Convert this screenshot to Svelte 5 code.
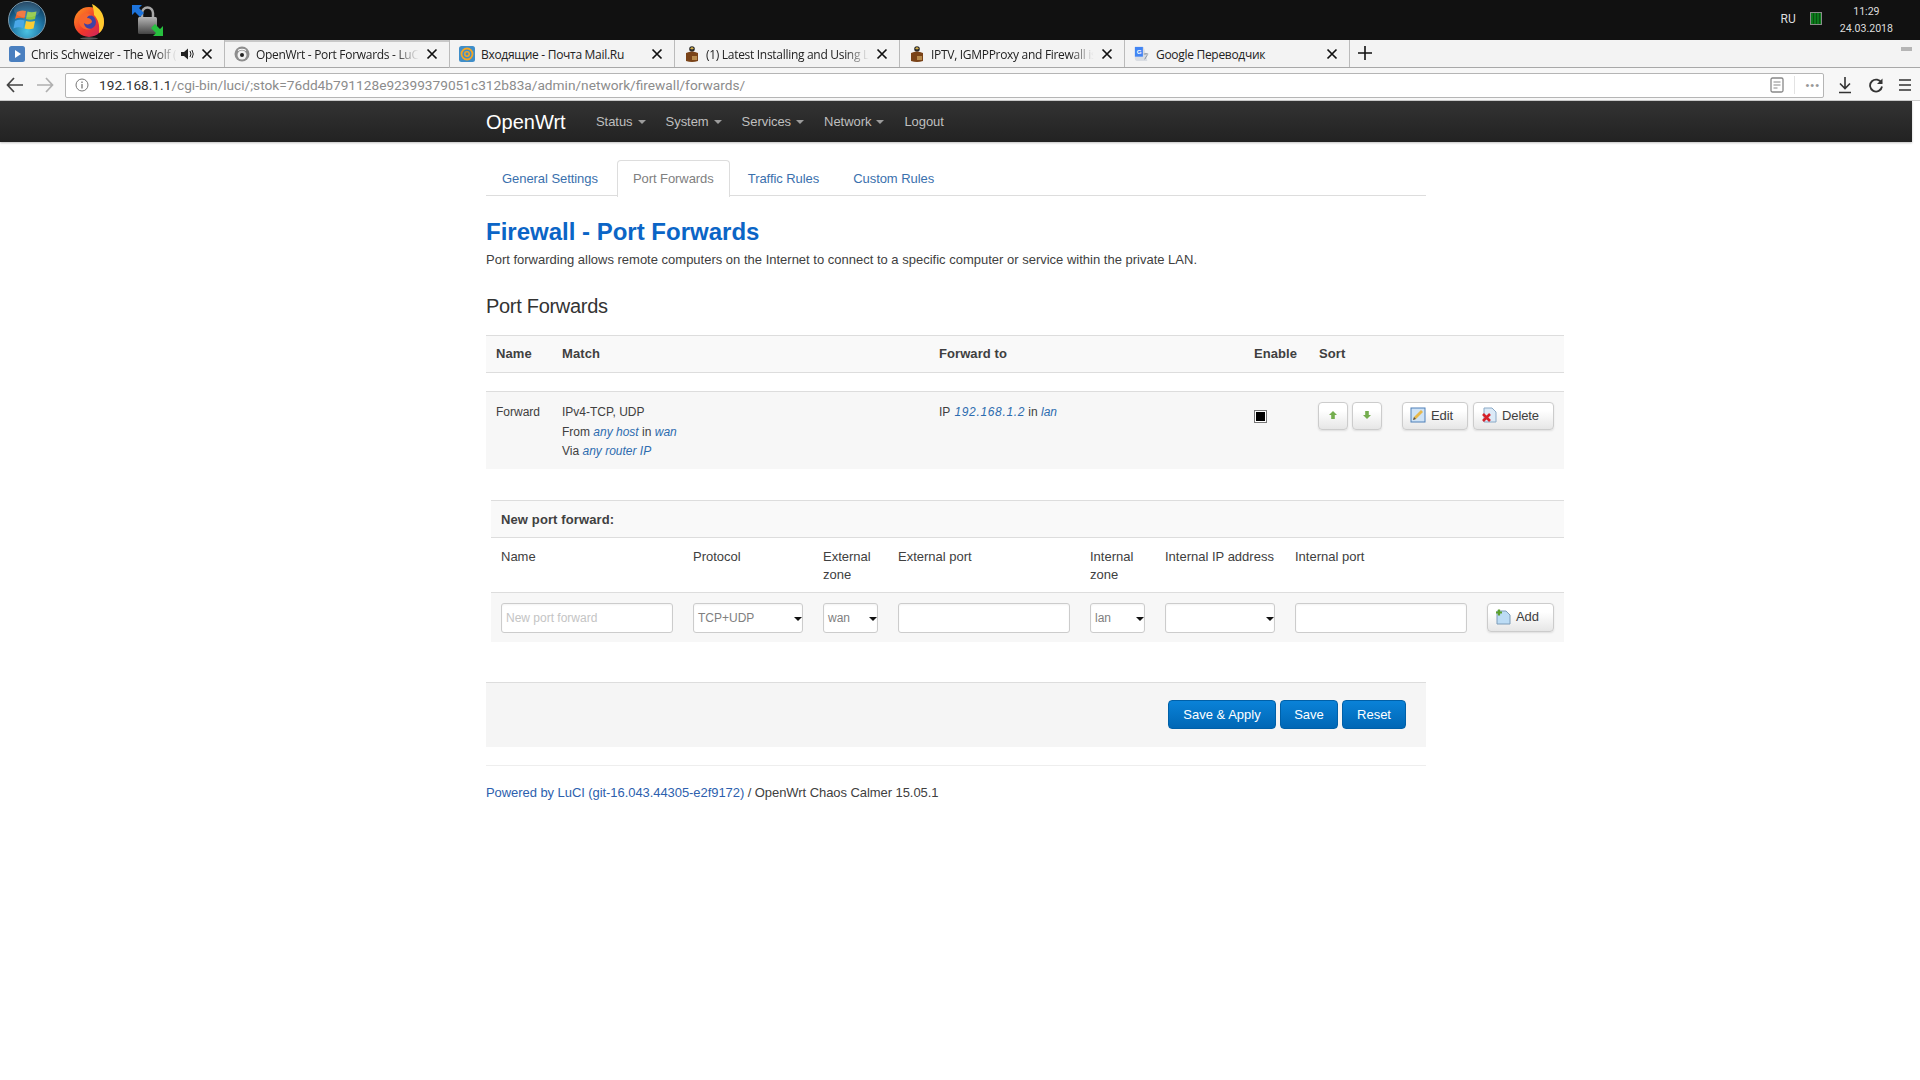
<script>
	const tabs = [
		{ title: 'Chris Schweizer - The Wolf (', icon: 'play', audio: true, fade: true },
		{ title: 'OpenWrt - Port Forwards - LuC', icon: 'wrt', active: true, fade: true },
		{ title: 'Входящие - Почта Mail.Ru', icon: 'mail' },
		{ title: '(1) Latest Installing and Using L', icon: 'box', fade: true },
		{ title: 'IPTV, IGMPProxy and Firewall is', icon: 'box', fade: true },
		{ title: 'Google Переводчик', icon: 'translate' }
	];
	const navItems = ['Status', 'System', 'Services', 'Network'];
	const pageTabs = ['General Settings', 'Port Forwards', 'Traffic Rules', 'Custom Rules'];
	const newLabels = [
		['Name'],
		['Protocol'],
		['External', 'zone'],
		['External port'],
		['Internal', 'zone'],
		['Internal IP address'],
		['Internal port'],
		[]
	];
</script>

<div class="screen">
	<div class="taskbar">
		<div class="tray-left">
			<svg class="orb" width="38" height="38" viewBox="0 0 38 38">
				<defs>
					<radialGradient id="orbFill" cx="50%" cy="80%" r="75%">
						<stop offset="0" stop-color="#4cc3e2" />
						<stop offset="0.55" stop-color="#2078a8" />
						<stop offset="1" stop-color="#0e3a5c" />
					</radialGradient>
				</defs>
				<circle cx="19" cy="19" r="18.500" fill="url(#orbFill)" stroke="#7d9aab" />
				<path d="M9 11q4-2.500 9-1l-1.500 7.500q-5-1.500-9.500.5z" fill="#f0682c" />
				<path d="M19.500 10.500q4 1.500 9 0L27 18q-5 1.500-9 0z" fill="#8cc63f" />
				<path d="M7 20q4.500-2 9.500-.5L15 27q-5-1.500-9.500.5z" fill="#4aa8e8" />
				<path d="M18 20q4 1.500 9 0l-1.500 7.500q-5 1.500-9 0z" fill="#fbcc34" />
				<ellipse cx="19" cy="9" rx="13" ry="7.500" fill="#fff" opacity="0.12" />
			</svg>
			<svg class="fox" width="32" height="36" viewBox="0 0 32 36">
				<defs>
					<linearGradient id="foxFill" x1="0" y1="0" x2="1" y2="1">
						<stop offset="0" stop-color="#ff9a1e" />
						<stop offset="0.55" stop-color="#f0362c" />
						<stop offset="1" stop-color="#c31f6a" />
					</linearGradient>
				</defs>
				<circle cx="16" cy="18" r="15" fill="url(#foxFill)" />
				<path d="M19 0c8 4 12 10 12 18 0 5-2 9-5 11 1-8-1-14-5-18 0-4-1-8-2-11z" fill="#ffcb2e" />
				<circle cx="16" cy="18" r="7" fill="#3f42a6" />
				<path d="M8 11c5-3 9-2 11 1-3-1-4 0-5 2 3 0 5 2 5 4-2 3-6 3-8 1 0 3 3 6 7 6-5 2-11-1-12-7 0-3 1-5 2-7z" fill="#f7662c" />
				<ellipse cx="16" cy="34.500" rx="9" ry="1.200" fill="#888" opacity="0.6" />
			</svg>
			<svg class="vpn" width="34" height="36" viewBox="0 0 34 36">
				<defs>
					<linearGradient id="lockFill" x1="0" y1="0" x2="0" y2="1">
						<stop offset="0" stop-color="#b5b5b5" />
						<stop offset="1" stop-color="#444" />
					</linearGradient>
				</defs>
				<path d="M11 13V9a5.500 5.500 0 0 1 11 0v4" fill="none" stroke="#a8a8a8" stroke-width="2.500" />
				<rect x="7" y="13" width="19" height="17" rx="1.500" fill="url(#lockFill)" />
				<path d="M1 1h10L8 4l5 5-4 4-5-5-3 3z" fill="#1d74dc" />
				<path d="M32 32H22l3-3-5-5 4-4 5 5 3-3z" fill="#27c03f" />
			</svg>
		</div>
		<div class="tray-right">
			<span class="lang">RU</span>
			<span class="meter"></span>
			<div class="clock"><span>11:29</span><span>24.03.2018</span></div>
		</div>
	</div>

	<div class="tabstrip">
		{#each tabs as tab}
			<div class="tab" class:active={tab.active}>
				<span class="favicon">
					{#if tab.icon === 'play'}
						<svg width="16" height="16" viewBox="0 0 16 16"><rect width="16" height="16" rx="2.500" fill="#4a7fbf" /><path d="M6 4l6 4-6 4z" fill="#fff" /></svg>
					{:else if tab.icon === 'wrt'}
						<svg width="16" height="16" viewBox="0 0 16 16"><circle cx="8" cy="8" r="7.500" fill="#8d8d8d" /><circle cx="8" cy="9" r="4.500" fill="#f2f2f2" /><circle cx="8" cy="9" r="2" fill="#222" /><path d="M4 4.500q4-2.500 8 0" fill="none" stroke="#fff" stroke-width="1.200" /></svg>
					{:else if tab.icon === 'mail'}
						<svg width="16" height="16" viewBox="0 0 16 16"><rect width="16" height="16" rx="2.500" fill="#3f8ec9" /><circle cx="8" cy="8" r="5.500" fill="none" stroke="#f5a623" stroke-width="1.800" /><circle cx="8" cy="8" r="2.200" fill="none" stroke="#f5a623" stroke-width="1.500" /></svg>
					{:else if tab.icon === 'box'}
						<svg width="16" height="18" viewBox="0 0 16 18"><circle cx="8" cy="4" r="2.800" fill="#2b2b2b" /><path d="M6 3.500l2-1.500 2 1.500-2 1z" fill="#d8b24a" /><path d="M2 8q6-3 12 0v8q-6 2-12 0z" fill="#7a4318" /><rect x="8" y="11" width="5" height="4" fill="#b88a4c" /></svg>
					{:else}
						<svg width="18" height="18" viewBox="0 0 18 18"><path d="M1 1h10l4 16H5q-4 0-4-3z" fill="#d9dde3" /><path d="M1 1h9v11H1z" fill="#4285f4" /><text x="3" y="9" class="g-letter">G</text><path d="M11 9h5M13.500 8v1M12 15l3-5" stroke="#7d8794" stroke-width="1" fill="none" /></svg>
					{/if}
				</span>
				<span class="tab-title" class:faded={tab.fade}>{tab.title}</span>
				{#if tab.audio}
					<svg class="speaker" width="14" height="14" viewBox="0 0 14 14"><path d="M1 5h3l4-3.500v11L4 9H1z" fill="#222" /><path d="M10 4q2 3 0 6M12 3q2.500 4 0 8" fill="none" stroke="#222" stroke-width="1" /></svg>
				{/if}
				<svg class="close" width="12" height="12" viewBox="0 0 12 12"><path d="M1.500 1.500l9 9M10.500 1.500l-9 9" stroke="#111" stroke-width="1.700" /></svg>
			</div>
		{/each}
		<svg class="newtab" width="16" height="16" viewBox="0 0 16 16"><path d="M8 1v14M1 8h14" stroke="#111" stroke-width="1.600" /></svg>
		<span class="minimize"></span>
	</div>

	<div class="toolbar">
		<svg class="back" width="18" height="16" viewBox="0 0 18 16"><path d="M8 1L1.500 8 8 15M2 8h15" fill="none" stroke="#444" stroke-width="1.700" /></svg>
		<svg class="forward" width="18" height="16" viewBox="0 0 18 16"><path d="M10 1l6.500 7-6.500 7M16 8H1" fill="none" stroke="#b0b0b0" stroke-width="1.700" /></svg>
		<div class="urlbar">
			<svg class="info" width="14" height="14" viewBox="0 0 14 14"><circle cx="7" cy="7" r="6" fill="none" stroke="#777" /><path d="M7 6v4.500M7 3.500v1.500" stroke="#777" stroke-width="1.300" /></svg>
			<span class="url"><b>192.168.1.1</b>/cgi-bin/luci/;stok=76dd4b791128e92399379051c312b83a/admin/network/firewall/forwards/</span>
			<svg class="reader" width="14" height="16" viewBox="0 0 14 16"><rect x="1" y="1" width="12" height="14" rx="1.500" fill="none" stroke="#888" stroke-width="1.300" /><path d="M3.500 5h7M3.500 8h7M3.500 11h4" stroke="#888" /></svg>
			<span class="sep"></span>
			<span class="dots">•••</span>
		</div>
		<svg class="tool" width="16" height="18" viewBox="0 0 16 18"><path d="M8 1v11M3 7.500l5 5 5-5M2 16.500h12" fill="none" stroke="#333" stroke-width="1.600" /></svg>
		<svg class="tool" width="16" height="16" viewBox="0 0 16 16"><path d="M13.500 6A6 6 0 1 0 14 9.500" fill="none" stroke="#333" stroke-width="1.800" /><path d="M14.500 1.500v5.500h-5.500z" fill="#333" /></svg>
		<svg class="tool" width="14" height="14" viewBox="0 0 14 14"><path d="M1 2h12M1 7h12M1 12h12" stroke="#333" stroke-width="1.700" /></svg>
	</div>

	<div class="page">
		<div class="navbar">
			<div class="nav-inner">
				<span class="brand">OpenWrt</span>
				{#each navItems as item}
					<span class="nav-item">{item}<i class="caret"></i></span>
				{/each}
				<span class="nav-item">Logout</span>
			</div>
		</div>

		<div class="main">
			<ul class="page-tabs">
				{#each pageTabs as t, i}
					<li class:current={i === 1}>{t}</li>
				{/each}
			</ul>

			<h2>Firewall - Port Forwards</h2>
			<p class="desc">Port forwarding allows remote computers on the Internet to connect to a specific computer or service within the private LAN.</p>
			<h3>Port Forwards</h3>

			<div class="rules">
				<div class="rules-row rules-head">
					<span>Name</span><span>Match</span><span>Forward to</span><span>Enable</span><span>Sort</span>
				</div>
				<div class="rules-gap"></div>
				<div class="rules-row rules-body">
					<span class="cell">Forward</span>
					<div class="cell match">
						<div>IPv4-TCP, UDP</div>
						<div>From <em>any host</em> in <em>wan</em></div>
						<div>Via <em>any router IP</em></div>
					</div>
					<span class="cell">IP <em class="spaced">192.168.1.2</em> in <em>lan</em></span>
					<div class="check-cell"><span class="check"></span></div>
					<div class="actions">
						<button class="btn square">
							<svg width="10" height="10" viewBox="0 0 10 10"><path d="M5 1l4 4H6.800v4H3.200V5H1z" fill="#74ad4e" /></svg>
						</button>
						<button class="btn square">
							<svg width="10" height="10" viewBox="0 0 10 10"><path d="M5 9L1 5h2.200V1h3.600v4H9z" fill="#74ad4e" /></svg>
						</button>
						<button class="btn labeled edit">
							<svg width="16" height="16" viewBox="0 0 16 16"><rect x="1" y="1" width="14" height="14" fill="#cfe3f6" stroke="#4d7fb8" /><path d="M3 13l1-3 7-7 2 2-7 7z" fill="#e8b84a" /><path d="M3 13l1-3 2 2z" fill="#555" /></svg>
							Edit
						</button>
						<button class="btn labeled delete">
							<svg width="16" height="16" viewBox="0 0 16 16"><path d="M3 1h8l4 4v10H3z" fill="#dceaf7" stroke="#8aa9c6" /><path d="M2 7l7 7M9 7l-7 7" stroke="#d5222a" stroke-width="2.600" /></svg>
							Delete
						</button>
					</div>
				</div>
			</div>

			<div class="newfwd">
				<div class="newfwd-title">New port forward:</div>
				<div class="newfwd-grid labels">
					{#each newLabels as lines}
						<div>
							{#each lines as line}
								<div>{line}</div>
							{/each}
						</div>
					{/each}
				</div>
				<div class="newfwd-grid fields">
					<input class="field" placeholder="New port forward" />
					<div class="field select">TCP+UDP<i class="arrow"></i></div>
					<div class="field select">wan<i class="arrow"></i></div>
					<input class="field" />
					<div class="field select">lan<i class="arrow"></i></div>
					<div class="field select"><i class="arrow"></i></div>
					<input class="field" />
					<button class="btn labeled add">
						<svg width="16" height="16" viewBox="0 0 16 16"><path d="M2 2h9l4 4v9H2z" fill="#bcdcf5" stroke="#7d9cb8" /><path d="M1 3.500h6M4 .5v6" stroke="#5ca02c" stroke-width="2.200" /></svg>
						Add
					</button>
				</div>
			</div>

			<div class="page-actions">
				<button class="primary apply">Save &amp; Apply</button>
				<button class="primary save">Save</button>
				<button class="primary reset">Reset</button>
			</div>

			<footer>
				<span class="powered">Powered by LuCI (git-16.043.44305-e2f9172)</span> / OpenWrt Chaos Calmer 15.05.1
			</footer>
		</div>
	</div>
</div>

<style>
	:global(body) {
		margin: 0;
		background: #fff;
	}

	.screen {
		width: 1920px;
		height: 1080px;
		overflow: hidden;
		background: #fff;
		font-family: "Liberation Sans", Arial, sans-serif;
		display: flex;
		flex-direction: column;
	}

	/* desktop bar */
	.taskbar {
		height: 40px;
		flex: none;
		background: #111;
		display: flex;
		justify-content: space-between;
	}
	.tray-left {
		display: flex;
		align-items: flex-start;
		padding: 1px 0 0 8px;
	}
	.fox {
		margin: 3px 0 0 27px;
	}
	.vpn {
		margin: 3px 0 0 26px;
	}
	.tray-right {
		display: flex;
		align-items: center;
		color: #ddd;
		font: 12px "Roboto", sans-serif;
		padding: 0 27px 3px 0;
		box-sizing: border-box;
	}
	.lang {
		margin-right: 14px;
	}
	.meter {
		width: 12px;
		height: 13px;
		background: repeating-linear-gradient(90deg, #0c7a1c 0 2px, #08500f 2px 3px);
		border: 1px solid #8a8a8a;
		box-sizing: border-box;
		margin-right: 18px;
	}
	.clock {
		display: flex;
		flex-direction: column;
		align-items: center;
		line-height: 17px;
		font-size: 10.600px;
		margin-top: 3px;
	}

	/* browser tabs */
	.tabstrip {
		height: 28px;
		flex: none;
		background: #f3f3f3;
		border-bottom: 1px solid #a8a8a8;
		display: flex;
		box-sizing: border-box;
		position: relative;
	}
	.tab {
		width: 225px;
		box-sizing: border-box;
		border-right: 1px solid #bbb;
		display: flex;
		align-items: center;
		padding: 1px 11px 0 9px;
		font: 12px "Open Sans", sans-serif;
		color: #222;
	}
	.tab.active {
		box-shadow: inset 0 2px 0 #c8c8c8;
		margin-bottom: -1px;
		padding-bottom: 1px;
	}
	.favicon {
		width: 16px;
		height: 18px;
		flex: none;
		display: flex;
		align-items: center;
		justify-content: center;
		margin-right: 6px;
	}
	.g-letter {
		font: bold 7px "Liberation Sans", sans-serif;
		fill: #fff;
	}
	.tab-title {
		flex: 1;
		min-width: 0;
		white-space: nowrap;
		letter-spacing: -0.300px;
	}
	.tab-title.faded {
		mask-image: linear-gradient(to right, #000 84%, transparent 98%);
	}
	.speaker {
		flex: none;
		margin: 0 3px 0 0;
	}
	.close {
		flex: none;
		margin-left: 4px;
	}
	.newtab {
		margin: 5px 0 0 7px;
	}
	.minimize {
		position: absolute;
		right: 8px;
		top: 7px;
		width: 11px;
		height: 4px;
		background: #b5b5b5;
	}

	/* address bar */
	.toolbar {
		height: 33px;
		flex: none;
		background: #f7f7f7;
		border-bottom: 1px solid #ccc;
		box-sizing: border-box;
		display: flex;
		align-items: center;
		padding: 2px 0 0 6px;
	}
	.forward {
		margin-left: 12px;
	}
	.urlbar {
		flex: 1 0 auto;
		max-width: 1759px;
		height: 25px;
		margin-left: 11px;
		margin-right: 13px;
		background: #fff;
		border: 1px solid #b5b5b5;
		border-radius: 2px;
		box-sizing: border-box;
		display: flex;
		align-items: center;
		padding: 0 3px 0 9px;
	}
	.url {
		flex: 1;
		margin-left: 10px;
		font: 13.700px "Roboto", sans-serif;
		color: #8c8c8c;
		white-space: nowrap;
	}
	.url b {
		font-weight: 400;
		color: #333;
	}
	.sep {
		width: 1px;
		height: 18px;
		background: #e3e3e3;
		margin: 0 10px 0 10px;
	}
	.dots {
		font-size: 11px;
		color: #999;
		letter-spacing: 1px;
	}
	.tool {
		flex: none;
		margin-right: 15px;
	}
	.tool:last-child {
		margin-right: 3px;
		margin-left: -1px;
	}

	/* luci page */
	.page {
		flex: 1;
		color: #404040;
		font-size: 13px;
		line-height: 18px;
	}
	.navbar {
		height: 41px;
		width: 1912px;
		background: linear-gradient(#333, #222);
		box-shadow: 0 1px 2px rgba(0, 0, 0, 0.25);
	}
	.nav-inner {
		margin-left: 486px;
		display: flex;
		align-items: center;
		height: 100%;
	}
	.brand {
		color: #fff;
		font-size: 20px;
		width: 110px;
	}
	.nav-item {
		color: #bfbfbf;
		margin-right: 20px;
		letter-spacing: -0.050px;
	}
	.caret {
		display: inline-block;
		border: 4px solid transparent;
		border-top-color: #9c9c9c;
		border-bottom: 0;
		margin-left: 5px;
		vertical-align: middle;
	}

	.main {
		margin-left: 486px;
		width: 940px;
		padding-top: 18px;
	}
	.page-tabs {
		list-style: none;
		margin: 0;
		padding: 0;
		height: 36px;
		box-sizing: border-box;
		border-bottom: 1px solid #ddd;
		display: flex;
	}
	.page-tabs li {
		height: 35px;
		padding: 0 15px;
		border: 1px solid transparent;
		border-bottom: 0;
		margin-right: 2px;
		line-height: 35px;
		color: #3a70ad;
		white-space: nowrap;
		letter-spacing: -0.060px;
	}
	.page-tabs li:first-child {
		margin-right: 3px;
	}
	.page-tabs li.current {
		color: #808080;
		background: #fff;
		border-color: #ddd;
		border-radius: 4px 4px 0 0;
		height: 36px;
		margin-bottom: -1px;
	}

	h2 {
		margin: 21px 0 0;
		font-size: 24px;
		line-height: 30px;
		font-weight: 700;
		color: #0b65c6;
	}
	.desc {
		margin: 4px 0 0;
		font-size: 13px;
		line-height: 18px;
	}
	h3 {
		margin: 23px 0 0;
		font-size: 20px;
		line-height: 28px;
		font-weight: 400;
		color: #333;
		letter-spacing: -0.300px;
	}

	.rules {
		width: 1078px;
		margin-top: 15px;
	}
	.rules-row {
		display: grid;
		grid-template-columns: 66px 377px 315px 65px 1fr;
		padding-left: 10px;
		background: #f9f9f9;
		border-top: 1px solid #ddd;
	}
	.rules-head {
		height: 38px;
		padding-bottom: 1px;
		align-items: center;
		font-weight: 700;
		border-bottom: 1px solid #ddd;
		box-sizing: border-box;
		letter-spacing: 0.080px;
	}
	.rules-gap {
		height: 18px;
	}
	.rules-body {
		height: 78px;
		box-sizing: border-box;
		font-size: 12px;
		background: #f7f7f7;
	}
	.cell {
		padding-top: 10px;
		line-height: 20px;
	}
	.match {
		padding-top: 11px;
		line-height: 19.500px;
	}
	em {
		color: #2d6caf;
	}
	.spaced {
		letter-spacing: 0.650px;
		margin-left: 1px;
	}
	.check-cell {
		padding: 18px 0 0 0;
	}
	.check {
		display: block;
		width: 13px;
		height: 13px;
		box-sizing: border-box;
		background: #000;
		border: 1px solid #777;
		outline: 1px solid #fff;
		outline-offset: -2px;
	}
	.actions {
		display: flex;
		align-items: flex-start;
		padding-top: 10px;
		margin-left: -1px;
	}

	.btn {
		height: 28px;
		box-sizing: border-box;
		font: 13px "Liberation Sans", sans-serif;
		letter-spacing: -0.100px;
		color: #404040;
		background: linear-gradient(#fff 30%, #e6e6e6);
		border: 1px solid #ccc;
		border-radius: 4px;
		box-shadow: 0 1px 2px rgba(0, 0, 0, 0.1);
		display: flex;
		align-items: center;
		justify-content: center;
		padding: 0 0 2px;
		gap: 5px;
	}
	.labeled {
		justify-content: flex-start;
		padding-left: 7px;
	}
	.square {
		width: 30px;
		margin-right: 4px;
	}
	.edit {
		width: 66px;
		margin-left: 16px;
		margin-right: 5px;
	}
	.delete {
		width: 81px;
	}

	.newfwd {
		width: 1073px;
		margin: 31px 0 0 5px;
	}
	.newfwd-title {
		height: 38px;
		box-sizing: border-box;
		padding-left: 10px;
		background: #f9f9f9;
		border-top: 1px solid #ddd;
		border-bottom: 1px solid #ddd;
		font-size: 13px;
		font-weight: 700;
		line-height: 38px;
		letter-spacing: 0.120px;
	}
	.newfwd-grid {
		display: grid;
		grid-template-columns: 172px 110px 55px 172px 55px 110px 172px 67px;
		column-gap: 20px;
		padding-left: 10px;
	}
	.labels {
		height: 55px;
		box-sizing: border-box;
		padding-top: 10px;
		border-bottom: 1px solid #ddd;
		font-size: 13px;
	}
	.fields {
		height: 49px;
		box-sizing: border-box;
		padding-top: 10px;
		background: #f7f7f7;
	}
	.field {
		height: 30px;
		width: 100%;
		box-sizing: border-box;
		margin: 0;
		background: #fff;
		border: 1px solid #ccc;
		border-radius: 3px;
		font: 12px "Liberation Sans", sans-serif;
		color: #808080;
		padding: 0 4px;
		box-shadow: inset 0 1px 2px rgba(0, 0, 0, 0.05);
	}
	.field::placeholder {
		color: #c4c4c4;
	}
	.select {
		display: flex;
		align-items: center;
		position: relative;
	}
	.arrow {
		position: absolute;
		right: 0;
		top: 13px;
		border: 4px solid transparent;
		border-top-color: #111;
		border-bottom: 0;
	}
	.add {
		height: 29px;
	}

	.page-actions {
		height: 65px;
		box-sizing: border-box;
		margin-top: 40px;
		background: #f5f5f5;
		border-top: 1px solid #ddd;
		display: flex;
		justify-content: flex-end;
		align-items: flex-start;
		gap: 4px;
		padding: 17px 20px 0 0;
	}
	.primary {
		height: 29px;
		padding: 0;
		font: 13px "Liberation Sans", sans-serif;
		color: #fff;
		background: linear-gradient(#0a82d8, #0067b5);
		border: 1px solid #0060a8;
		border-radius: 4px;
	}
	.apply {
		width: 108px;
	}
	.save {
		width: 58px;
	}
	.reset {
		width: 64px;
	}

	footer {
		margin-top: 18px;
		padding-top: 18px;
		border-top: 1px solid #eee;
		font-size: 13px;
		line-height: 18px;
		letter-spacing: -0.065px;
		color: #404040;
	}
	.powered {
		color: #2d5fae;
	}
</style>
